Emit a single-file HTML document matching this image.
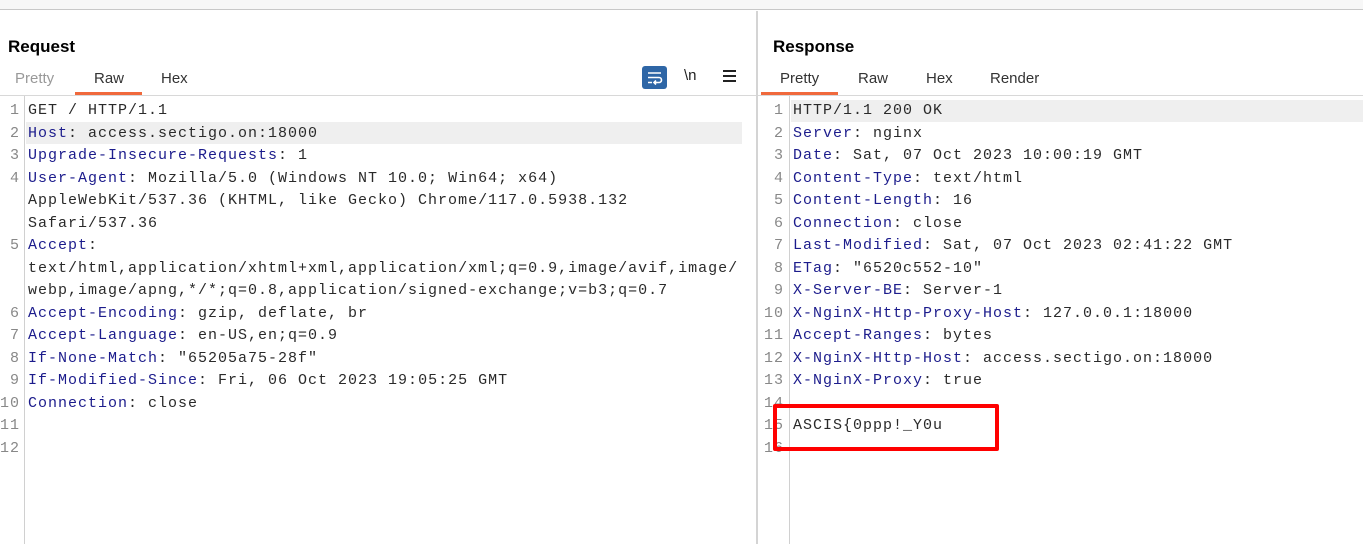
<!DOCTYPE html>
<html><head><meta charset="utf-8"><style>
*{margin:0;padding:0;box-sizing:border-box}
body{width:1363px;height:544px;background:#fff;position:relative;overflow:hidden;font-family:"Liberation Sans",sans-serif}
.top{position:absolute;left:0;top:0;width:1363px;height:10px;background:#f7f7f7;border-bottom:1px solid #c8c8c8}
.title{position:absolute;top:37px;font-weight:bold;font-size:17px;color:#000}
.tab{position:absolute;top:70px;font-size:15px;color:#333}
.ul{position:absolute;top:92px;height:3px;background:#f0693c}
.sep{position:absolute;top:95px;height:1px;background:#d8d8d8}
.gut{position:absolute;top:96px;bottom:0;width:1px;background:#d0d0d0}
.vdiv{position:absolute;left:756px;top:11px;bottom:0;width:2px;background:#d4d4d4}
.ln{position:absolute;font-family:"Liberation Mono",monospace;font-size:15px;letter-spacing:1px;color:#888;text-align:right;width:20px;line-height:22.5px}
.code{position:absolute;font-family:"Liberation Mono",monospace;font-size:15px;letter-spacing:1px;color:#2a2a2a;line-height:22.5px;white-space:pre}
.k{color:#1c1c8c}
.hl{position:absolute;height:22px;background:#efefef}
</style></head><body>
<div class="top"></div>
<div class="vdiv"></div>

<div class="title" style="left:8px">Request</div>
<div class="tab" style="left:15px;color:#999">Pretty</div>
<div class="tab" style="left:94px">Raw</div>
<div class="tab" style="left:161px">Hex</div>
<div class="ul" style="left:75px;width:67px"></div>
<div class="sep" style="left:0;width:756px"></div>
<div style="position:absolute;left:642px;top:66px;width:25px;height:23px;background:#2e66a6;border-radius:3px">
<svg width="25" height="23" viewBox="0 0 25 23"><path d="M6 7h13M6 11.5h11a2.5 2.5 0 0 1 0 5h-4M14 14.5l-2 2 2 2M6 16.5h4" stroke="#fff" stroke-width="1.6" fill="none"/></svg></div>
<div style="position:absolute;left:684px;top:67px;font-size:15px;color:#222">\n</div>
<div style="position:absolute;left:723px;top:70px;width:13px">
<div style="height:2px;background:#222;margin-bottom:3px"></div><div style="height:2px;background:#222;margin-bottom:3px"></div><div style="height:2px;background:#222"></div></div>
<div class="gut" style="left:24px"></div>
<div class="hl" style="left:26px;top:122px;width:716px"></div>
<div class="ln" style="left:0;top:100px">1<br>2<br>3<br>4<br><br><br>5<br><br><br>6<br>7<br>8<br>9<br>10<br>11<br>12</div>
<div class="code" style="left:28px;top:100px">GET / HTTP/1.1
<span class="k">Host</span>: access.sectigo.on:18000
<span class="k">Upgrade-Insecure-Requests</span>: 1
<span class="k">User-Agent</span>: Mozilla/5.0 (Windows NT 10.0; Win64; x64)
AppleWebKit/537.36 (KHTML, like Gecko) Chrome/117.0.5938.132
Safari/537.36
<span class="k">Accept</span>:
text/html,application/xhtml+xml,application/xml;q=0.9,image/avif,image/
webp,image/apng,*/*;q=0.8,application/signed-exchange;v=b3;q=0.7
<span class="k">Accept-Encoding</span>: gzip, deflate, br
<span class="k">Accept-Language</span>: en-US,en;q=0.9
<span class="k">If-None-Match</span>: "65205a75-28f"
<span class="k">If-Modified-Since</span>: Fri, 06 Oct 2023 19:05:25 GMT
<span class="k">Connection</span>: close</div>

<div class="title" style="left:773px">Response</div>
<div class="tab" style="left:780px">Pretty</div>
<div class="tab" style="left:858px">Raw</div>
<div class="tab" style="left:926px">Hex</div>
<div class="tab" style="left:990px">Render</div>
<div class="ul" style="left:761px;width:77px"></div>
<div class="sep" style="left:758px;width:605px"></div>
<div class="gut" style="left:789px"></div>
<div class="hl" style="left:791px;top:100px;width:572px"></div>
<div class="ln" style="left:764px;top:100px">1<br>2<br>3<br>4<br>5<br>6<br>7<br>8<br>9<br>10<br>11<br>12<br>13<br>14<br>15<br>16</div>
<div class="code" style="left:793px;top:100px">HTTP/1.1 200 OK
<span class="k">Server</span>: nginx
<span class="k">Date</span>: Sat, 07 Oct 2023 10:00:19 GMT
<span class="k">Content-Type</span>: text/html
<span class="k">Content-Length</span>: 16
<span class="k">Connection</span>: close
<span class="k">Last-Modified</span>: Sat, 07 Oct 2023 02:41:22 GMT
<span class="k">ETag</span>: "6520c552-10"
<span class="k">X-Server-BE</span>: Server-1
<span class="k">X-NginX-Http-Proxy-Host</span>: 127.0.0.1:18000
<span class="k">Accept-Ranges</span>: bytes
<span class="k">X-NginX-Http-Host</span>: access.sectigo.on:18000
<span class="k">X-NginX-Proxy</span>: true

ASCIS{0ppp!_Y0u</div>
<div style="position:absolute;left:773px;top:404px;width:226px;height:47px;border:4px solid #f00;border-radius:2px"></div>
</body></html>
